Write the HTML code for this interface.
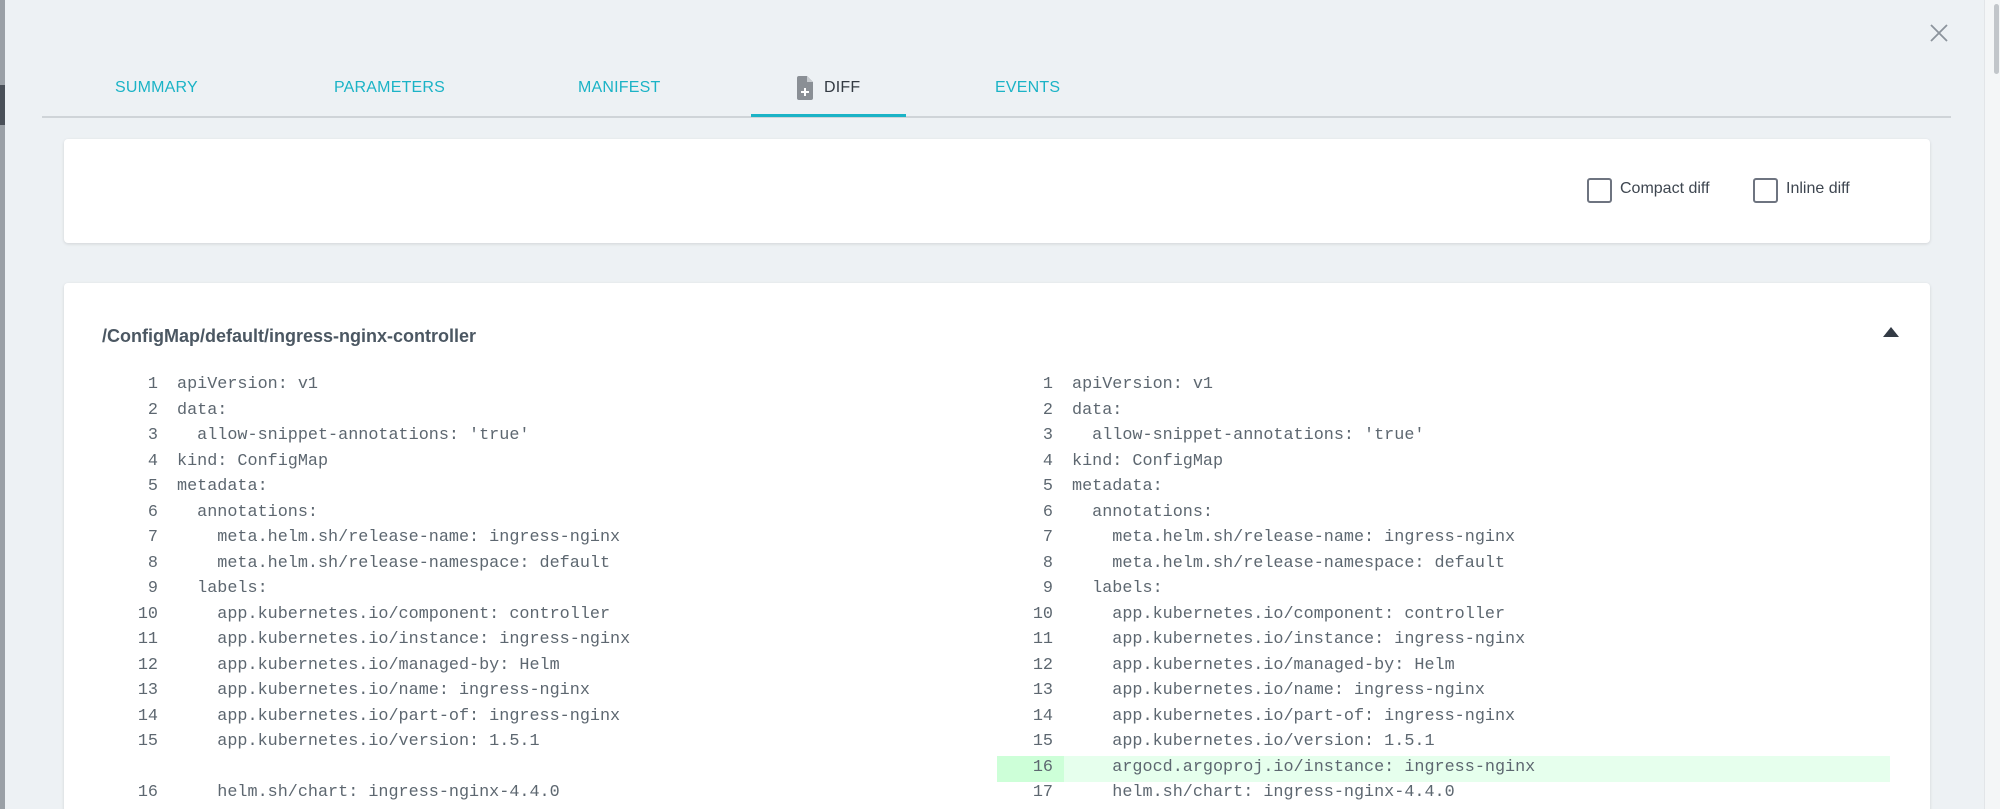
<!DOCTYPE html>
<html><head><meta charset="utf-8"><style>
*{margin:0;padding:0;box-sizing:border-box}
html,body{width:2000px;height:809px;overflow:hidden;background:#edf1f4;font-family:"Liberation Sans",sans-serif;position:relative}
.abs{position:absolute}
.tab{position:absolute;top:78px;font-size:16px;color:#1bb3c6;letter-spacing:0.2px;line-height:20px}
.card{position:absolute;left:64px;width:1866px;background:#fff;border-radius:4px;box-shadow:0 1px 3px rgba(0,0,0,0.12)}
.cb{position:absolute;top:178px;width:25px;height:25px;border:2px solid #6e7480;border-radius:3px}
.cbl{position:absolute;top:180px;font-size:16px;color:#3e4650}
.code{position:absolute;font-family:"Liberation Mono",monospace;font-size:16.8px;color:#5d6770;white-space:pre;line-height:25.5px}
.ln{position:absolute;font-family:"Liberation Mono",monospace;font-size:16.8px;color:#5d6770;text-align:right;width:60px;line-height:25.5px;white-space:pre}
</style></head><body>
<div class="abs" style="left:0;top:0;width:5px;height:809px;background:#9aa0a6"></div>
<div class="abs" style="left:0;top:85px;width:5px;height:40px;background:#4a5058"></div>
<div class="abs" style="left:1984px;top:0;width:16px;height:809px;background:#f4f6f7;border-left:1px solid #e2e5e8"></div>
<div class="abs" style="left:1994px;top:4px;width:5px;height:70px;background:#c2c6ca;border-radius:3px"></div>
<svg class="abs" style="left:1929px;top:23px" width="20" height="20" viewBox="0 0 20 20"><path d="M2 2L18 18M18 2L2 18" stroke="#8c949c" stroke-width="1.8"/></svg>

<div class="tab" style="left:115px">SUMMARY</div>
<div class="tab" style="left:334px">PARAMETERS</div>
<div class="tab" style="left:578px">MANIFEST</div>
<svg class="abs" style="left:797px;top:76px" width="16" height="24" viewBox="0 0 16 24"><path d="M2 0H10L16 6V22Q16 24 14 24H2Q0 24 0 22V2Q0 0 2 0Z" fill="#8a8f95"/><path d="M10 0V6H16" fill="#c8ccd0"/><path d="M8 12V20M4 16H12" stroke="#fff" stroke-width="2"/></svg>
<div class="tab" style="left:824px;color:#333a42">DIFF</div>
<div class="tab" style="left:995px">EVENTS</div>
<div class="abs" style="left:42px;top:116px;width:1909px;height:2px;background:#cfd4d8"></div>
<div class="abs" style="left:751px;top:114px;width:155px;height:3px;background:#1bb3c6"></div>

<div class="card" style="top:139px;height:104px"></div>
<div class="cb" style="left:1587px"></div>
<div class="cbl" style="left:1620px">Compact diff</div>
<div class="cb" style="left:1753px"></div>
<div class="cbl" style="left:1786px">Inline diff</div>

<div class="card" style="top:283px;height:540px"></div>
<div class="abs" style="left:102px;top:326px;font-size:18px;font-weight:bold;color:#4b5762">/ConfigMap/default/ingress-nginx-controller</div>
<svg class="abs" style="left:1883px;top:327px" width="16" height="10" viewBox="0 0 16 10"><path d="M8 0L16 10H0Z" fill="#333b45"/></svg>

<div class="abs" style="left:997px;top:756px;width:893px;height:26px;background:#e6ffed"></div>
<div class="abs" style="left:997px;top:756px;width:67px;height:26px;background:#cdffd8"></div>

<div class="ln" style="left:98px;top:372px">1
2
3
4
5
6
7
8
9
10
11
12
13
14
15

16</div>
<div class="code" style="left:177px;top:372px">apiVersion: v1
data:
  allow-snippet-annotations: 'true'
kind: ConfigMap
metadata:
  annotations:
    meta.helm.sh/release-name: ingress-nginx
    meta.helm.sh/release-namespace: default
  labels:
    app.kubernetes.io/component: controller
    app.kubernetes.io/instance: ingress-nginx
    app.kubernetes.io/managed-by: Helm
    app.kubernetes.io/name: ingress-nginx
    app.kubernetes.io/part-of: ingress-nginx
    app.kubernetes.io/version: 1.5.1

    helm.sh/chart: ingress-nginx-4.4.0</div>
<div class="ln" style="left:993px;top:372px">1
2
3
4
5
6
7
8
9
10
11
12
13
14
15
16
17</div>
<div class="code" style="left:1072px;top:372px">apiVersion: v1
data:
  allow-snippet-annotations: 'true'
kind: ConfigMap
metadata:
  annotations:
    meta.helm.sh/release-name: ingress-nginx
    meta.helm.sh/release-namespace: default
  labels:
    app.kubernetes.io/component: controller
    app.kubernetes.io/instance: ingress-nginx
    app.kubernetes.io/managed-by: Helm
    app.kubernetes.io/name: ingress-nginx
    app.kubernetes.io/part-of: ingress-nginx
    app.kubernetes.io/version: 1.5.1
    argocd.argoproj.io/instance: ingress-nginx
    helm.sh/chart: ingress-nginx-4.4.0</div>
</body></html>
